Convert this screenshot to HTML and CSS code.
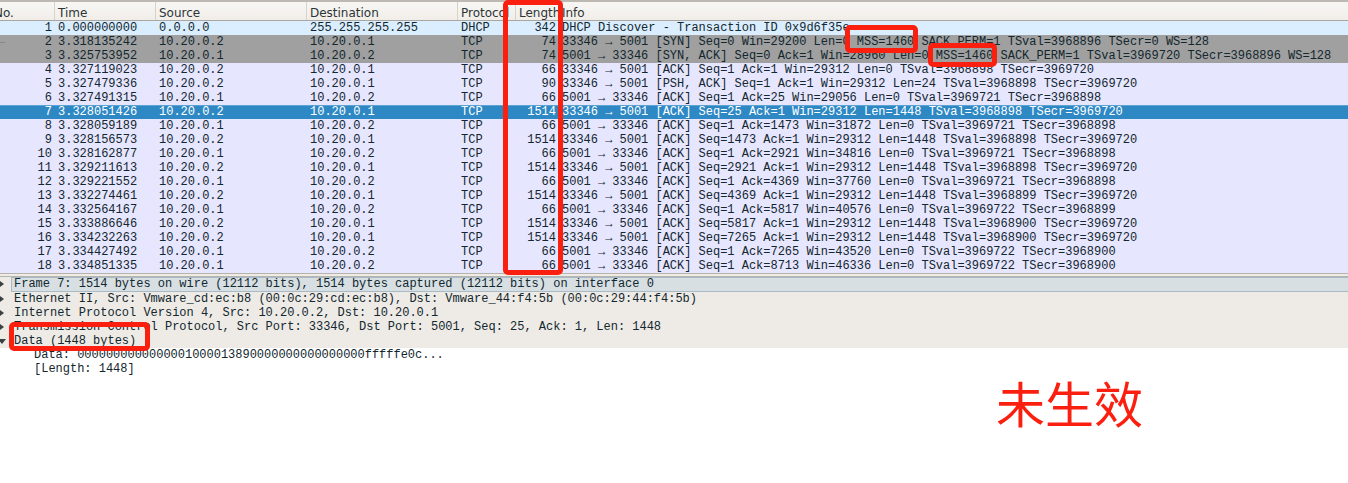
FILE: index.html
```html
<!DOCTYPE html>
<html lang="en">
<head>
<meta charset="utf-8">
<title>Wireshark capture</title>
<link rel="stylesheet" href="styles.css">
</head>
<body>
<div class="app">
  <div class="top-edge"></div>
  <div class="head row-grid">
    <div class="hc hc-no"><span>No.</span></div>
    <div class="hc">Time</div>
    <div class="hc">Source</div>
    <div class="hc">Destination</div>
    <div class="hc">Protocol</div>
    <div class="hc">Length</div>
    <div class="hc hc-last">Info</div>
  </div>
  <div class="packets">
    <div class="row-grid pk dhcp"><span class="no">1</span><span>0.000000000</span><span>0.0.0.0</span><span>255.255.255.255</span><span>DHCP</span><span class="len">342</span><span>DHCP Discover - Transaction ID 0x9d6f35e</span></div>
    <div class="row-grid pk syn"><span class="no">2</span><span>3.318135242</span><span>10.20.0.2</span><span>10.20.0.1</span><span>TCP</span><span class="len">74</span><span>33346 → 5001 [SYN] Seq=0 Win=29200 Len=0 MSS=1460 SACK_PERM=1 TSval=3968896 TSecr=0 WS=128</span><i class="rel"></i></div>
    <div class="row-grid pk syn"><span class="no">3</span><span>3.325753952</span><span>10.20.0.1</span><span>10.20.0.2</span><span>TCP</span><span class="len">74</span><span>5001 → 33346 [SYN, ACK] Seq=0 Ack=1 Win=28960 Len=0 MSS=1460 SACK_PERM=1 TSval=3969720 TSecr=3968896 WS=128</span></div>
    <div class="row-grid pk"><span class="no">4</span><span>3.327119023</span><span>10.20.0.2</span><span>10.20.0.1</span><span>TCP</span><span class="len">66</span><span>33346 → 5001 [ACK] Seq=1 Ack=1 Win=29312 Len=0 TSval=3968898 TSecr=3969720</span></div>
    <div class="row-grid pk"><span class="no">5</span><span>3.327479336</span><span>10.20.0.2</span><span>10.20.0.1</span><span>TCP</span><span class="len">90</span><span>33346 → 5001 [PSH, ACK] Seq=1 Ack=1 Win=29312 Len=24 TSval=3968898 TSecr=3969720</span></div>
    <div class="row-grid pk"><span class="no">6</span><span>3.327491315</span><span>10.20.0.1</span><span>10.20.0.2</span><span>TCP</span><span class="len">66</span><span>5001 → 33346 [ACK] Seq=1 Ack=25 Win=29056 Len=0 TSval=3969721 TSecr=3968898</span></div>
    <div class="row-grid pk sel"><span class="no">7</span><span>3.328051426</span><span>10.20.0.2</span><span>10.20.0.1</span><span>TCP</span><span class="len">1514</span><span>33346 → 5001 [ACK] Seq=25 Ack=1 Win=29312 Len=1448 TSval=3968898 TSecr=3969720</span></div>
    <div class="row-grid pk"><span class="no">8</span><span>3.328059189</span><span>10.20.0.1</span><span>10.20.0.2</span><span>TCP</span><span class="len">66</span><span>5001 → 33346 [ACK] Seq=1 Ack=1473 Win=31872 Len=0 TSval=3969721 TSecr=3968898</span></div>
    <div class="row-grid pk"><span class="no">9</span><span>3.328156573</span><span>10.20.0.2</span><span>10.20.0.1</span><span>TCP</span><span class="len">1514</span><span>33346 → 5001 [ACK] Seq=1473 Ack=1 Win=29312 Len=1448 TSval=3968898 TSecr=3969720</span></div>
    <div class="row-grid pk"><span class="no">10</span><span>3.328162877</span><span>10.20.0.1</span><span>10.20.0.2</span><span>TCP</span><span class="len">66</span><span>5001 → 33346 [ACK] Seq=1 Ack=2921 Win=34816 Len=0 TSval=3969721 TSecr=3968898</span></div>
    <div class="row-grid pk"><span class="no">11</span><span>3.329211613</span><span>10.20.0.2</span><span>10.20.0.1</span><span>TCP</span><span class="len">1514</span><span>33346 → 5001 [ACK] Seq=2921 Ack=1 Win=29312 Len=1448 TSval=3968898 TSecr=3969720</span></div>
    <div class="row-grid pk"><span class="no">12</span><span>3.329221552</span><span>10.20.0.1</span><span>10.20.0.2</span><span>TCP</span><span class="len">66</span><span>5001 → 33346 [ACK] Seq=1 Ack=4369 Win=37760 Len=0 TSval=3969721 TSecr=3968898</span></div>
    <div class="row-grid pk"><span class="no">13</span><span>3.332274461</span><span>10.20.0.2</span><span>10.20.0.1</span><span>TCP</span><span class="len">1514</span><span>33346 → 5001 [ACK] Seq=4369 Ack=1 Win=29312 Len=1448 TSval=3968899 TSecr=3969720</span></div>
    <div class="row-grid pk"><span class="no">14</span><span>3.332564167</span><span>10.20.0.1</span><span>10.20.0.2</span><span>TCP</span><span class="len">66</span><span>5001 → 33346 [ACK] Seq=1 Ack=5817 Win=40576 Len=0 TSval=3969722 TSecr=3968899</span></div>
    <div class="row-grid pk"><span class="no">15</span><span>3.333886646</span><span>10.20.0.2</span><span>10.20.0.1</span><span>TCP</span><span class="len">1514</span><span>33346 → 5001 [ACK] Seq=5817 Ack=1 Win=29312 Len=1448 TSval=3968900 TSecr=3969720</span></div>
    <div class="row-grid pk"><span class="no">16</span><span>3.334232263</span><span>10.20.0.2</span><span>10.20.0.1</span><span>TCP</span><span class="len">1514</span><span>33346 → 5001 [ACK] Seq=7265 Ack=1 Win=29312 Len=1448 TSval=3968900 TSecr=3969720</span></div>
    <div class="row-grid pk"><span class="no">17</span><span>3.334427492</span><span>10.20.0.1</span><span>10.20.0.2</span><span>TCP</span><span class="len">66</span><span>5001 → 33346 [ACK] Seq=1 Ack=7265 Win=43520 Len=0 TSval=3969722 TSecr=3968900</span></div>
    <div class="row-grid pk"><span class="no">18</span><span>3.334851335</span><span>10.20.0.1</span><span>10.20.0.2</span><span>TCP</span><span class="len">66</span><span>5001 → 33346 [ACK] Seq=1 Ack=8713 Win=46336 Len=0 TSval=3969722 TSecr=3968900</span></div>
  </div>
  <div class="splitter"></div>
  <div class="tree">
    <div class="node"><i class="arrow"></i><span class="label label-sel">Frame 7: 1514 bytes on wire (12112 bits), 1514 bytes captured (12112 bits) on interface 0</span></div>
    <div class="node"><i class="arrow"></i><span class="label">Ethernet II, Src: Vmware_cd:ec:b8 (00:0c:29:cd:ec:b8), Dst: Vmware_44:f4:5b (00:0c:29:44:f4:5b)</span></div>
    <div class="node"><i class="arrow"></i><span class="label">Internet Protocol Version 4, Src: 10.20.0.2, Dst: 10.20.0.1</span></div>
    <div class="node"><i class="arrow"></i><span class="label">Transmission Control Protocol, Src Port: 33346, Dst Port: 5001, Seq: 25, Ack: 1, Len: 1448</span></div>
    <div class="node node-open"><i class="arrow arrow-open"></i><span class="label">Data (1448 bytes)</span></div>
    <div class="leaf">Data: 0000000000000001000013890000000000000000fffffe0c...</div>
    <div class="leaf">[Length: 1448]</div>
  </div>
  <div class="mark mark-length"></div>
  <div class="mark mark-mss1"></div>
  <div class="mark mark-mss2"></div>
  <div class="mark mark-data"></div>
  <div class="note">未生效</div>
</div>
</body>
</html>
```
FILE: styles.css
```css
* { box-sizing: border-box; }
html, body { margin: 0; padding: 0; background: #fff; }
body { overflow: hidden; }
.app {
  position: relative;
  width: 1348px;
  height: 483px;
  overflow: hidden;
  font-family: "Liberation Mono", monospace;
  font-size: 12px;
  letter-spacing: -0.012px;
  color: #12272e;
}
.top-edge { height: 2px; background: #bdb8b2; }
.row-grid {
  display: grid;
  grid-template-columns: 55px 101px 151px 151px 58px 43px 1fr;
  width: 1348px;
}
.head {
  height: 19px;
  background: linear-gradient(#f8f6f3, #f1eeea);
  border-bottom: 1px solid #aaa6a0;
  font-family: "DejaVu Sans", sans-serif;
  font-size: 12px;
  color: #2e3436;
}
.hc {
  padding-left: 3px;
  padding-top: 2px;
  line-height: 18px;
  border-right: 1px solid #d6d2cc;
  overflow: hidden;
  white-space: nowrap;
}
.hc-no { padding-left: 0; }
.hc-no span { display: block; margin-left: -6px; }
.hc-last { border-right: 0; }
.pk {
  position: relative;
  height: 14px;
  line-height: 14px;
  background: #e7e6ff;
  white-space: nowrap;
}
.pk span { padding-left: 3px; overflow: visible; }
.pk .no { padding: 0 3px 0 0; text-align: right; }
.pk .len { padding: 0 3px 0 0; text-align: right; }
.dhcp { background: #daeeff; }
.syn { background: #a0a0a0; }
.sel { background: #2e88c4; color: #fff; box-shadow: inset 0 1px 0 #5ba3d3; }
.rel {
  position: absolute;
  left: 0;
  top: 7px;
  width: 5px;
  height: 1px;
  background: #7f8a8c;
}
.splitter {
  height: 4px;
  background: #efebe6;
  border-top: 1px solid #b6b2ac;
  border-bottom: 1px solid #b6b2ac;
}
.tree { background: #fff; }
.node {
  display: flex;
  align-items: center;
  height: 14px;
  background: #eeebe6;
  position: relative;
}
.node:first-child { height: 15px; }
.node-open { height: 14px; }
.arrow {
  position: absolute;
  left: 0;
  top: 4px;
  width: 0;
  height: 0;
  border-top: 3px solid transparent;
  border-bottom: 3px solid transparent;
  border-left: 4px solid #3a3f40;
}
.arrow-open {
  left: -2px;
  top: 5px;
  border-left: 4px solid transparent;
  border-right: 4px solid transparent;
  border-top: 5px solid #3a3f40;
  border-bottom: 0;
}
.label {
  display: block;
  flex: 1;
  margin-left: 11px;
  padding-left: 3px;
  line-height: 14px;
  white-space: nowrap;
}
.label-sel {
  height: 15px;
  background: #d7dfe3;
  border-top: 1px solid #a7bac6;
  border-bottom: 1px solid #a7bac6;
  border-left: 1px solid #a7bac6;
  padding-left: 2px;
  line-height: 13px;
}
.leaf {
  height: 14px;
  line-height: 14px;
  padding-left: 34px;
  white-space: nowrap;
}
.mark {
  position: absolute;
  border: 5px solid #fb1f10;
  border-radius: 5px;
}
.mark-length { left: 503px; top: 0; width: 60px; height: 275px; }
.mark-mss1 { left: 845px; top: 25px; width: 73px; height: 28px; }
.mark-mss2 { left: 928px; top: 43px; width: 69px; height: 24px; }
.mark-data { left: 9px; top: 322px; width: 141px; height: 29px; }
.note {
  position: absolute;
  left: 996px;
  top: 367px;
  font-family: "Noto Sans CJK SC", "Noto Sans CJK JP", sans-serif;
  font-size: 49px;
  line-height: 70px;
  color: #fb1f10;
  white-space: nowrap;
}
```
